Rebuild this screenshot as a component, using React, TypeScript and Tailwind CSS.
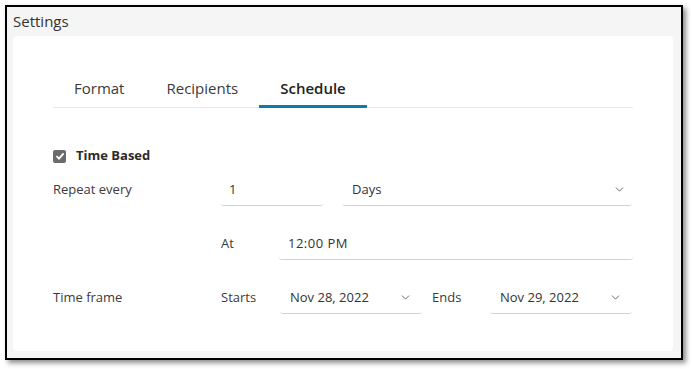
import { ChevronDown } from 'lucide-react';

const Chevron = () => <ChevronDown size={13} strokeWidth={1.6} className="text-[#555]" />;

const Field = ({ value, className, chevron, pad = 'pl-[10px]' }: { value: string; className: string; chevron?: string; pad?: string }) => (
  <div className={`h-[32px] flex items-center justify-between border-b border-[#d2d2dc] rounded-b-[3px] text-[13px] text-[#333] ${pad} ${className}`}>
    <span>{value}</span>
    {chevron && <span className={chevron}><Chevron /></span>}
  </div>
);

export default function App() {
  const tabs = ['Format', 'Recipients', 'Schedule'];
  return (
    <div className="min-h-screen bg-white font-['Open_Sans',sans-serif] pl-[5px] pt-[5px]">
      <div className="w-[678px] h-[355px] border-2 border-black bg-[#f5f5f5] shadow-[3px_3px_5px_rgba(0,0,0,0.45)] flex flex-col pl-[6px] pr-[8px] pb-[7px]">
        <div className="h-[29px] flex items-center text-[15px] text-[#333]">Settings</div>
        <div className="flex-1 bg-white rounded-[4px] px-[40px] pt-[31px] text-[#3b3b3b]">
          <div className="flex border-b border-[#e8e8e8]">
            {tabs.map((t) => (
              <div
                key={t}
                className={`relative h-[40px] px-[21px] pt-[3px] flex items-center text-[15px] ${t === 'Schedule' ? 'text-[#222] font-semibold' : 'text-[#3a3a3a]'}`}
              >
                {t}
                {t === 'Schedule' && <div className="absolute left-0 right-0 -bottom-px h-[3px] bg-[#0a7fa5]" />}
              </div>
            ))}
          </div>

          <div className="mt-[38px] h-[20px] flex items-center gap-[10px]">
            <div className="w-[13px] h-[13px] rounded-[2px] bg-[#6b6b6b] flex items-center justify-center">
              <svg width="10" height="10" viewBox="0 0 10 10">
                <path d="M1.5 5.2 L4 7.6 L8.6 2.4" fill="none" stroke="#fff" strokeWidth="1.8" />
              </svg>
            </div>
            <span className="text-[13px] font-bold text-[#2b2b2b]">Time Based</span>
          </div>

          <div className="mt-[8px] flex items-center text-[13px]">
            <div className="w-[168px]">Repeat every</div>
            <Field value="1" className="w-[102px]" pad="pl-[8px]" />
            <Field value="Days" className="w-[290px] ml-[19px]" chevron="pr-[6px]" />
          </div>

          <div className="mt-[22px] flex items-center text-[13px]">
            <div className="w-[168px]" />
            <div className="w-[58px]">At</div>
            <Field value="12:00 PM" className="w-[354px] tracking-[0.5px]" pad="pl-[9px]" />
          </div>

          <div className="mt-[22px] flex items-center text-[13px]">
            <div className="w-[168px]">Time frame</div>
            <div className="w-[59px]">Starts</div>
            <Field value="Nov 28, 2022" className="w-[142px]" chevron="pr-[10px]" />
            <div className="w-[68px] pl-[10px]">Ends</div>
            <Field value="Nov 29, 2022" className="w-[142px]" chevron="pr-[10px]" />
          </div>
        </div>
      </div>
    </div>
  );
}
